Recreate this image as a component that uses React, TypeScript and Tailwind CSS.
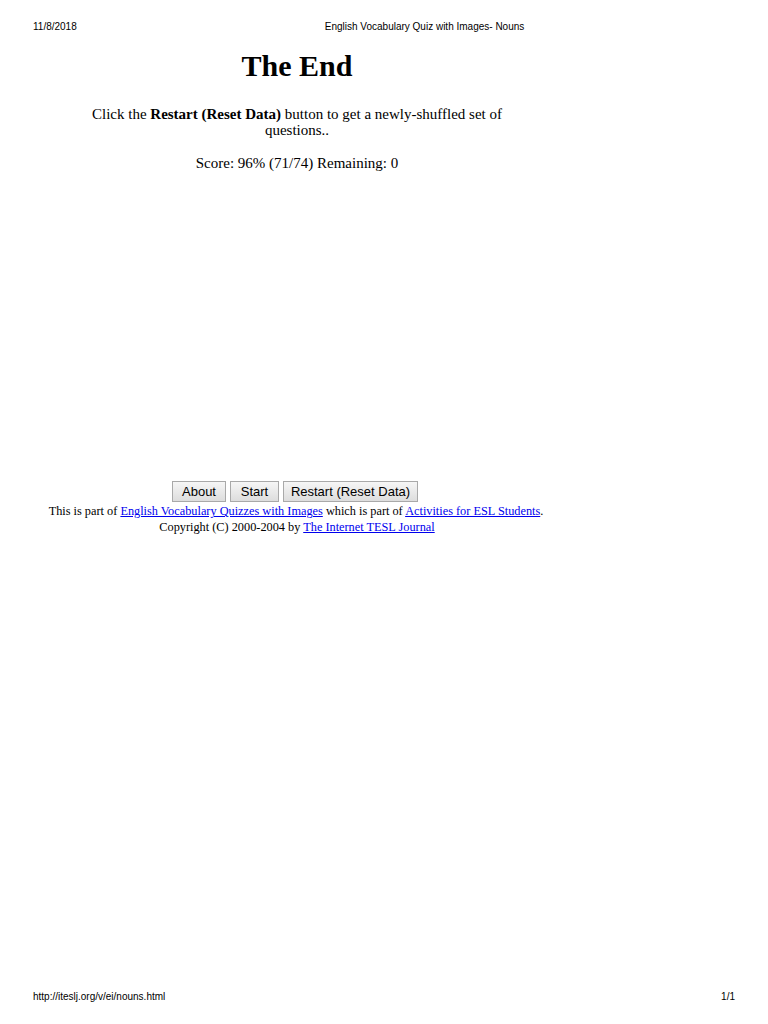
export default function App() {
  const serif = { fontFamily: '"Liberation Serif", "Times New Roman", serif' };
  return (
    <div className="flex h-[1024px] w-[768px] flex-col justify-between bg-white text-black">
      {/* print header */}
      <div className="flex pl-[33px] pr-[33px] pt-[19px] text-[10px] font-['Liberation_Sans',Arial,sans-serif]">
        <span>11/8/2018</span>
        <span className="ml-[248px]">English Vocabulary Quiz with Images- Nouns</span>
      </div>

      {/* page body */}
      <div className="flex flex-1 flex-col" style={serif}>
        <div className="flex w-[594px] flex-col items-center">
          <h1 className="mt-[14px] text-[30px] font-bold leading-[36px]">The End</h1>
          <p className="mt-[22px] w-[440px] text-center text-[15px] leading-[16px]">
            Click the <b>Restart (Reset Data)</b> button to get a newly-shuffled set of questions..
          </p>
          <p className="mt-[17px] text-[15px] leading-[16px]">Score: 96% (71/74) Remaining: 0</p>

          {/* empty picture area */}
          <div className="h-[310px]" />

          <div className="flex gap-[4px] pr-[4px] font-['Liberation_Sans',Arial,sans-serif] text-[13px]">
            <button className="h-[21px] w-[54px] border border-[#a9a9a9] bg-gradient-to-b from-[#f6f6f6] to-[#dddddd] leading-none">
              About
            </button>
            <button className="h-[21px] w-[49px] border border-[#a9a9a9] bg-gradient-to-b from-[#f6f6f6] to-[#dddddd] leading-none">
              Start
            </button>
            <button className="h-[21px] w-[135px] border border-[#a9a9a9] bg-gradient-to-b from-[#f6f6f6] to-[#dddddd] leading-none">
              Restart (Reset Data)
            </button>
          </div>
          <p className="mt-[2px] pr-[2px] text-[12.3px] leading-[15px]">
            This is part of{" "}
            <a href="#" className="text-[#0000ee] underline">
              English Vocabulary Quizzes with Images
            </a>{" "}
            which is part of{" "}
            <a href="#" className="text-[#0000ee] underline">
              Activities for ESL Students
            </a>
            .
          </p>
          <p className="text-[12.3px] leading-[16px]">
            Copyright (C) 2000-2004 by{" "}
            <a href="#" className="text-[#0000ee] underline">
              The Internet TESL Journal
            </a>
          </p>
        </div>
      </div>

      {/* print footer */}
      <div className="flex justify-between px-[33px] pb-[20px] text-[10px] font-['Liberation_Sans',Arial,sans-serif]">
        <span>http://iteslj.org/v/ei/nouns.html</span>
        <span>1/1</span>
      </div>
    </div>
  );
}
